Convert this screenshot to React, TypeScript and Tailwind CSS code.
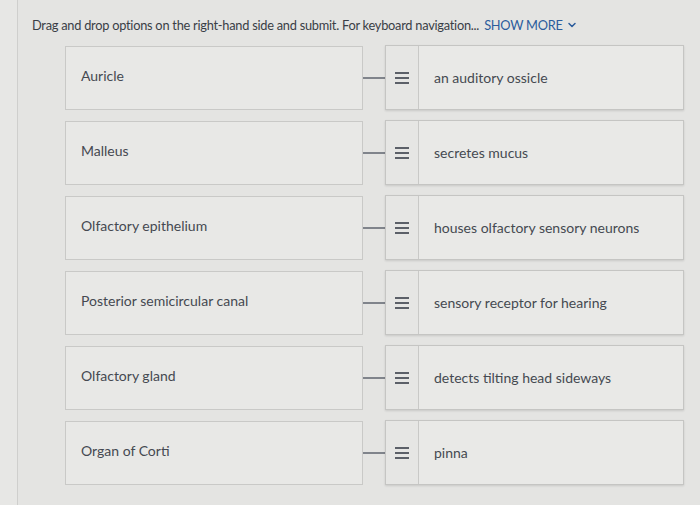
import { ChevronDown } from "lucide-react";

const pairs: [string, string][] = [
  ["Auricle", "an auditory ossicle"],
  ["Malleus", "secretes mucus"],
  ["Olfactory epithelium", "houses olfactory sensory neurons"],
  ["Posterior semicircular canal", "sensory receptor for hearing"],
  ["Olfactory gland", "detects tilting head sideways"],
  ["Organ of Corti", "pinna"],
];

function Handle() {
  return (
    <div className="flex w-[14px] flex-col gap-[3px]">
      <span className="h-[2px] w-full bg-[#5c6068]" />
      <span className="h-[2px] w-full bg-[#5c6068]" />
      <span className="h-[2px] w-full bg-[#5c6068]" />
    </div>
  );
}

export default function App() {
  return (
    <div
      className="flex h-[505px] w-[700px] overflow-hidden bg-[#e4e4e2] text-[#454951]"
      style={{ fontFamily: "Lato, 'Open Sans', sans-serif" }}
    >
      <div className="w-[18px] shrink-0 border-r border-[#cfcfcd] bg-[#e7e7e5]" />
      <main className="flex-1 pt-[17px]">
        <p className="ml-[14px] flex items-center text-[12.8px] leading-[16px] tracking-[-0.25px] text-[#3a3e46]">
          Drag and drop options on the right-hand side and submit. For keyboard navigation...
          <span className="ml-[5px] text-[#2b5c9c]">SHOW MORE</span>
          <ChevronDown className="ml-[3px] size-[12px] text-[#2b5c9c]" strokeWidth={3} />
        </p>

        <div className="ml-[47px] mt-[12px] flex flex-col gap-[10px]">
          {pairs.map(([term, def]) => (
            <div key={term} className="flex items-center">
              <div className="flex h-[64px] w-[298px] items-center border border-[#c9c9c7] bg-[#e8e8e6] pb-[4px] pl-[15px] text-[14px]">
                {term}
              </div>
              <div className="h-[2px] w-[22px] bg-[#80848b]" />
              <div className="flex h-[65px] w-[299px] border border-[#c5c5c3] bg-[#e9e9e7] shadow-[0_1px_2px_rgba(0,0,0,0.12)]">
                <div className="flex w-[33px] items-center justify-center border-r border-[#c9c9c7] bg-[#e6e6e4]">
                  <Handle />
                </div>
                <div className="flex flex-1 items-center pl-[15px] text-[14px]">{def}</div>
              </div>
            </div>
          ))}
        </div>
      </main>
    </div>
  );
}
